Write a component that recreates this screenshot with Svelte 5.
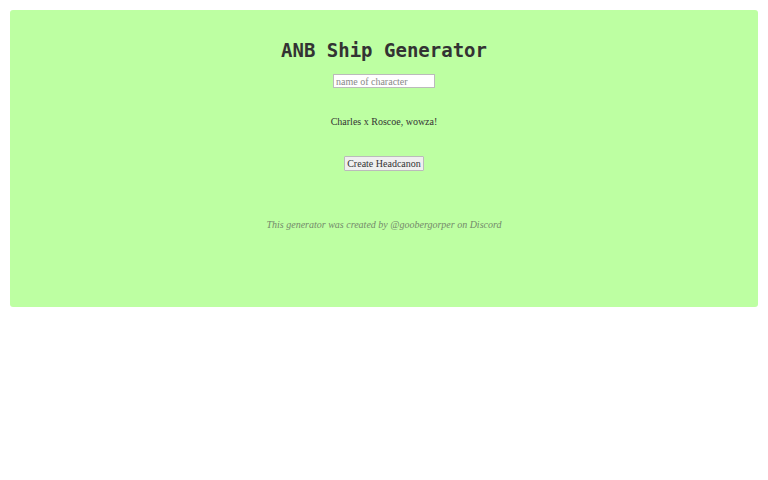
<script>
	const ships = ['Charles x Roscoe', 'Roscoe x Charles'];

	let name = '';
	let ship = ships[0];

	function createHeadcanon() {
		const other = ships[Math.floor(Math.random() * ships.length)];
		ship = name ? `${name} x ${other.split(' x ')[0]}` : other;
	}
</script>

<svelte:head>
	<title>ANB Ship Generator</title>
</svelte:head>

<main>
	<h1>ANB Ship Generator</h1>
	<input type="text" bind:value={name} placeholder="name of character" aria-label="name of character" />
	<p class="result">{ship}, wowza!</p>
	<button type="button" on:click={createHeadcanon}>Create Headcanon</button>
	<p class="credit">This generator was created by @goobergorper on Discord</p>
</main>

<style>
	:global(body) {
		background: white;
	}

	main {
		display: flex;
		flex-direction: column;
		align-items: center;
		margin: 10px;
		padding: 26px 16px 76px;
		border-radius: 3px;
		background: #bdffa2;
		color: #333;
		font-family: 'Liberation Serif', serif;
		font-size: 10px;
		line-height: 12px;
		text-align: center;
	}

	h1 {
		margin: 0 0 10px;
		font-family: 'DejaVu Sans Mono', monospace;
		font-size: 19px;
		line-height: 28px;
	}

	input,
	button {
		box-sizing: border-box;
		border: 1px solid #bbb;
		font: inherit;
		color: inherit;
	}

	input {
		width: 102px;
		height: 14px;
		padding: 0 2px;
		background: white;
	}

	input::placeholder {
		color: #888;
		opacity: 1;
	}

	.result {
		margin: 28px 0;
	}

	button {
		height: 15px;
		padding: 0 2px;
		border-radius: 1px;
		background: #efefef;
		line-height: 13px;
		cursor: pointer;
	}

	.credit {
		margin: 48px 0 0;
		color: #748a6a;
		font-style: italic;
	}
</style>
